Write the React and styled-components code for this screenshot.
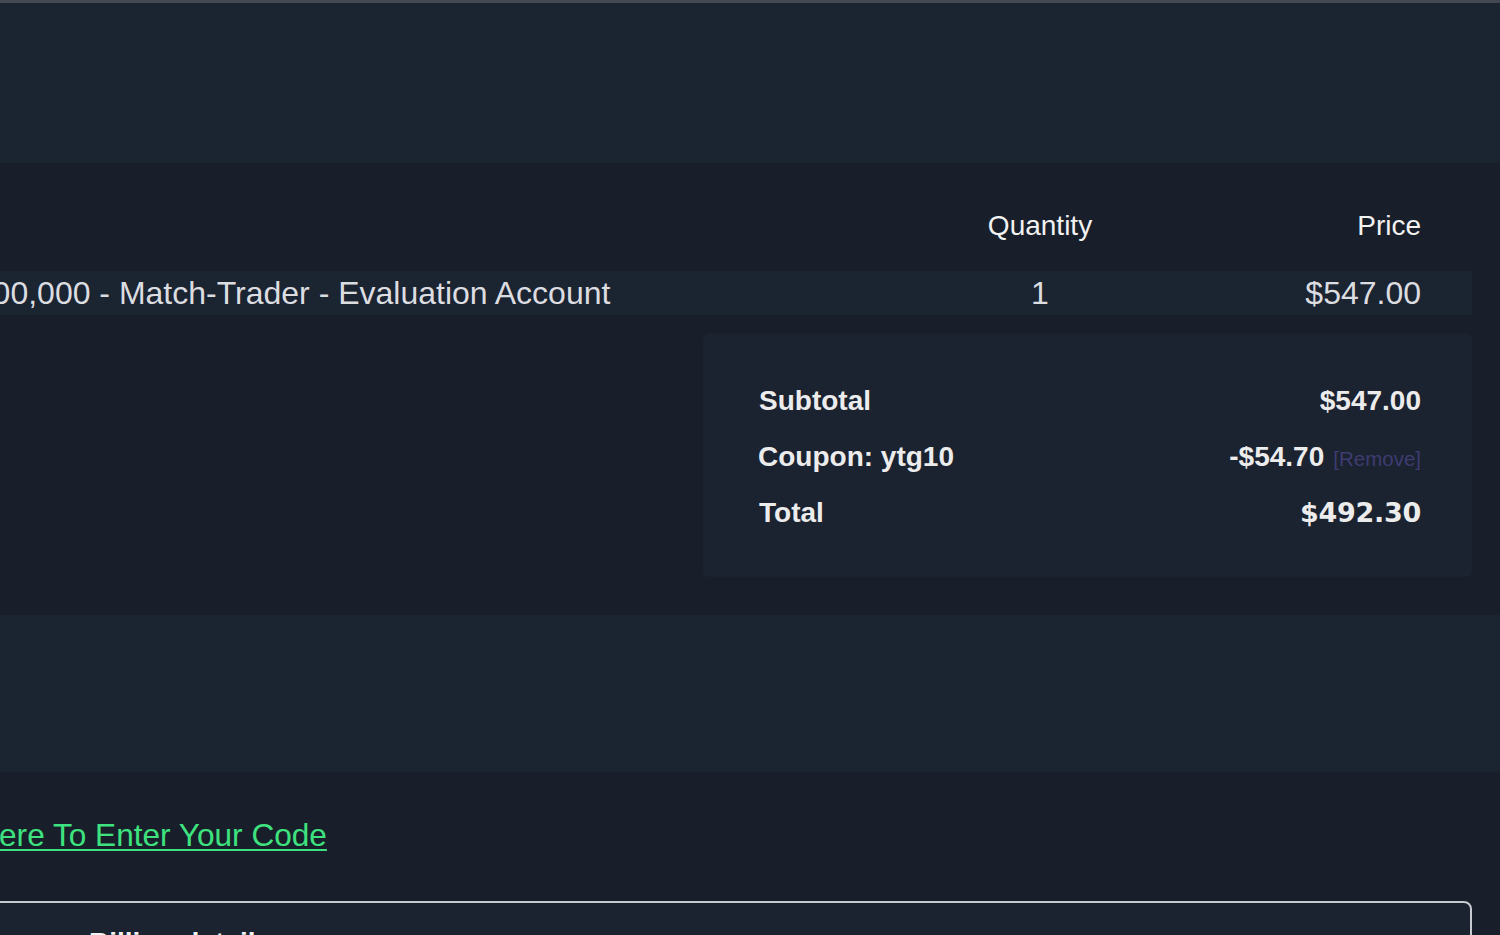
import React from "react";
import styled, { createGlobalStyle } from "styled-components";

const GlobalStyle = createGlobalStyle`
  html, body { margin: 0; padding: 0; background: #181f2a; }
  body { font-family: "Liberation Sans", Arial, sans-serif; overflow: hidden; }
  * { box-sizing: border-box; }
`;

const Page = styled.div`
  width: 1500px;
  height: 935px;
  overflow: hidden;
  border-top: 3px solid #434852;
  background: #181f2a;
`;

const Band = styled.section`
  background: ${(p) => (p.$light ? "#1b2431" : "#181f2a")};
  height: ${(p) => p.$h}px;
  padding: ${(p) => p.$pad || "0"};
`;

const Container = styled.div`
  margin-left: -200px;
  width: 1672px;
`;

const Grid = styled.div`
  display: grid;
  grid-template-columns: 1fr 200px 332px;
  align-items: center;
`;

const HeadRow = styled(Grid)`
  height: 34px;
  color: #f2f2f2;
  font-size: 28px;
  line-height: 34px;
`;

const ItemRow = styled(Grid)`
  margin-top: 28px;
  height: 44px;
  background: #1b2431;
  color: #dcdde0;
  font-size: 32px;
  line-height: 44px;
`;

const Cell = styled.div`
  white-space: nowrap;
  text-align: ${(p) => p.$align || "left"};
  padding-left: ${(p) => p.$pl || 0}px;
  padding-right: ${(p) => p.$pr || 0}px;
`;

const Summary = styled.div`
  margin: 18px 0 0 auto;
  width: 769px;
  background: #1b2230;
  border-radius: 6px;
  padding: 40px 51px 36px 55px;
`;

const SumRow = styled.div`
  display: flex;
  justify-content: space-between;
  align-items: baseline;
  height: 56px;
  line-height: 56px;
  color: #ececec;
  font-weight: 700;
  font-size: 28px;
`;

const Label = styled.span`
  margin-left: ${(p) => p.$ml || 0}px;
`;

const Amount = styled.span`
  font-family: ${(p) => (p.$total ? '"DejaVu Sans", Verdana, sans-serif' : 'inherit')};
  font-size: ${(p) => (p.$total ? 27 : 28)}px;
  letter-spacing: ${(p) => (p.$total ? "-0.3px" : "0")};
`;

const RemoveLink = styled.a`
  font-weight: 400;
  font-size: 20.5px;
  color: #3e3c70;
  margin-left: 9px;
  text-decoration: none;
`;

const CodeLink = styled.a`
  display: block;
  padding-left: 99px;
  font-size: 31.6px;
  line-height: 40px;
  color: #3ee27f;
  text-decoration: underline;
  text-underline-offset: 3px;
  text-decoration-thickness: 2px;
  white-space: nowrap;
`;

const Box = styled.div`
  margin-top: 46px;
  width: 1672px;
  height: 200px;
  border: 2px solid #c6c9ce;
  border-radius: 8px;
  background: #1b2230;
  padding: 23px 0 0 287px;
`;

const BoxTitle = styled.div`
  color: #f2f2f2;
  font-size: 28px;
  font-weight: 700;
  line-height: 34px;
`;

export default function App() {
  return (
    <>
      <GlobalStyle />
      <Page>
        <Band $light $h={160} />
        <Band $h={452} $pad="46px 0 0 0">
          <Container>
            <HeadRow>
              <Cell $pl={156}></Cell>
              <Cell $align="center">Quantity</Cell>
              <Cell $align="right" $pr={51}>Price</Cell>
            </HeadRow>
            <ItemRow>
              <Cell $pl={157}>$200,000 - Match-Trader - Evaluation Account</Cell>
              <Cell $align="center">1</Cell>
              <Cell $align="right" $pr={51}>$547.00</Cell>
            </ItemRow>
            <Summary>
              <SumRow>
                <Label $ml={1}>Subtotal</Label>
                <Amount>$547.00</Amount>
              </SumRow>
              <SumRow>
                <Label>Coupon: ytg10</Label>
                <span>
                  <Amount>-$54.70</Amount>
                  <RemoveLink href="#">[Remove]</RemoveLink>
                </span>
              </SumRow>
              <SumRow>
                <Label $ml={1}>Total</Label>
                <Amount $total>$492.30</Amount>
              </SumRow>
            </Summary>
          </Container>
        </Band>
        <Band $light $h={157} />
        <Band $h={400} $pad="43px 0 0 0">
          <Container>
            <CodeLink href="#">Click Here To Enter Your Code</CodeLink>
            <Box>
              <BoxTitle>Billing details</BoxTitle>
            </Box>
          </Container>
        </Band>
      </Page>
    </>
  );
}
